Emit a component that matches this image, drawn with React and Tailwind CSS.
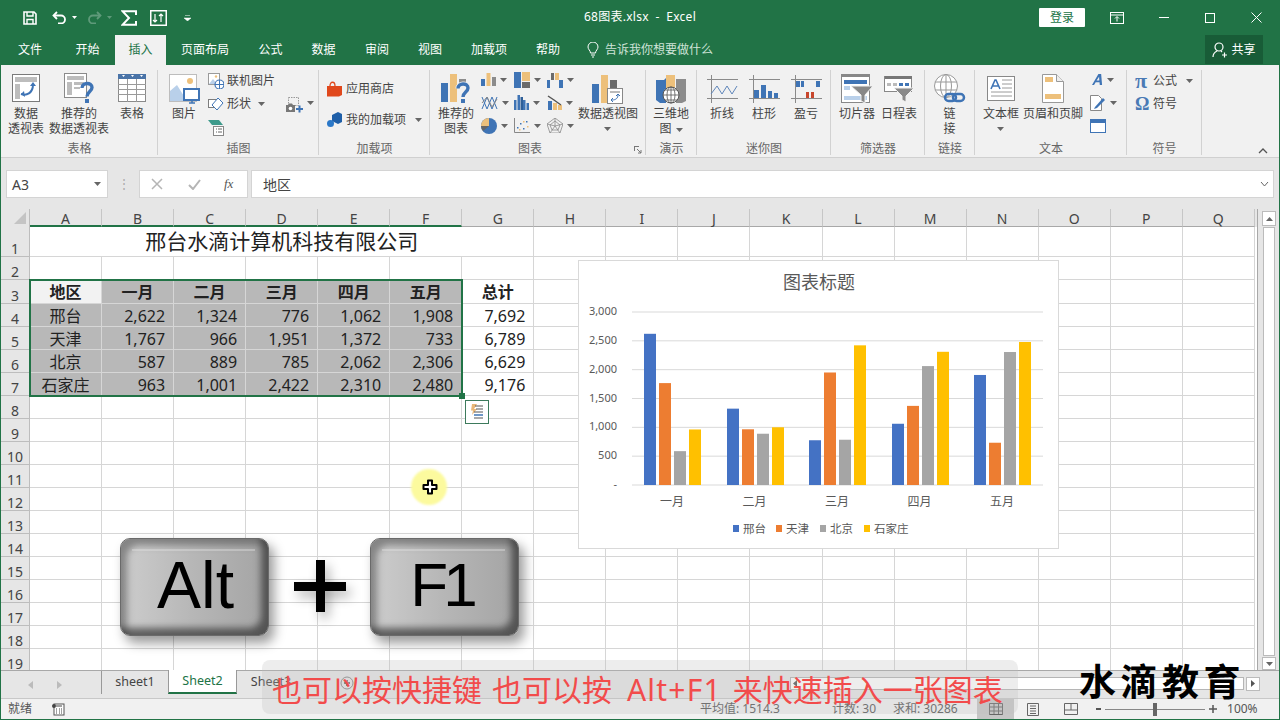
import React from "react";

const cjk = "font-['Noto_Sans','Noto_Sans_CJK_SC',sans-serif]";

const COLS = ["A","B","C","D","E","F","G","H","I","J","K","L","M","N","O","P","Q"];
const table = [
  ["邢台","2,622","1,324","776","1,062","1,908","7,692"],
  ["天津","1,767","966","1,951","1,372","733","6,789"],
  ["北京","587","889","785","2,062","2,306","6,629"],
  ["石家庄","963","1,001","2,422","2,310","2,480","9,176"],
];
const heads = ["地区","一月","二月","三月","四月","五月","总计"];

const B = "#3f74b5", O = "#edc07b", G = "#8c8c8c", D = "#6b6b6b";

function Caret({ className = "" }) {
  return <svg width="7" height="4" viewBox="0 0 7 4" className={className}><path d="M0 0h7L3.5 4z" fill="#666" /></svg>;
}

function Big({ icon, lines, w, caret }) {
  return (
    <div className={`flex flex-col items-center shrink-0 pt-[7px] ${w}`}>
      <div className="h-[33px] flex items-center justify-center">{icon}</div>
      <div className="mt-[1px] text-[12px] leading-[15px] text-[#444] text-center whitespace-nowrap">
        {lines.map((l, i) => <div key={i}>{l}</div>)}
        {caret && <div className="flex justify-center h-[15px] items-center"><Caret /></div>}
      </div>
    </div>
  );
}

function Group({ w, label, children, line = true, corner }) {
  return (
    <div className={`relative flex flex-col shrink-0 h-full ${w}`}>
      <div className="flex flex-1 min-h-0">{children}</div>
      <div className={`h-[20px] pt-[3px] text-[12px] leading-[18px] text-[#666] text-center ${corner ? "pr-[16px]" : ""}`}>{label}</div>
      {line && <div className="absolute right-0 top-[5px] bottom-[2px] w-[1px] bg-[#d2d2d2]" />}
      {corner && <svg width="8" height="8" viewBox="0 0 8 8" className="absolute right-[4px] bottom-[3px]"><path d="M0 .5h5M.5 0v5M3 3l4 4M7 4v3H4" stroke="#777" fill="none" /></svg>}
    </div>
  );
}

const IPivot = () => (
  <svg width="29" height="29" viewBox="0 0 29 29"><rect x=".5" y=".5" width="27" height="27" fill="#fff" stroke="#7a7a7a"/><path d="M3 3h22v5H3zM3 10h5v15H3z" fill="#bdbdbd"/><path d="M9 20c6 2 11-1 12-8" fill="none" stroke={B} strokeWidth="2"/><path d="M18 12l3-4 3 4zM12 17l-3 3 4 3z" fill={B}/></svg>
);
const IRecPivot = () => (
  <svg width="30" height="31" viewBox="0 0 30 31"><rect x=".5" y=".5" width="22" height="24" fill="#fff" stroke="#8a8a8a"/><path d="M3 3h17v4H3zM3 9h5v13H3zM10 9h10v3H10zM10 14h6v2H10z" fill="#bcbcbc"/><path d="M18 15c0-6 10-6 10-.5 0 4-5 4-5 9" fill="none" stroke={B} strokeWidth="3.400"/><rect x="21" y="26" width="4" height="4" fill={B}/></svg>
);
const ITable = () => (
  <svg width="29" height="29" viewBox="0 0 29 29"><rect x=".5" y=".5" width="27" height="27" fill="#fff" stroke="#8a8a8a"/><rect x="0" y="0" width="28" height="5" fill="#4a74a8"/><path d="M0 10.500h28M0 15.500h28M0 20.500h28M9.500 5v23M18.500 5v23" stroke="#9a9a9a"/><path d="M4 1l1.500 2 1.500-2zM13 1l1.500 2 1.500-2zM22 1l1.500 2 1.500-2z" fill="#fff"/></svg>
);
const IPicture = () => (
  <svg width="31" height="30" viewBox="0 0 31 30"><rect x=".5" y=".5" width="27" height="27" fill="#fff" stroke="#bdbdbd"/><circle cx="21" cy="7" r="3" fill={O}/><path d="M1 27V17l7-6 10 16z" fill="#b9d0ea"/><rect x="15" y="15" width="15" height="11" fill="#fff" stroke={B} strokeWidth="2"/><path d="M20 29h6M23 26v3" stroke={B} strokeWidth="1.500"/></svg>
);
const IOnline = () => (
  <svg width="16" height="16" viewBox="0 0 16 16"><rect x=".5" y=".5" width="11" height="11" fill="#fff" stroke="#9a9a9a"/><path d="M1 11l4-5 4 5z" fill="#b9d0ea"/><circle cx="8" cy="3.500" r="1.200" fill={O}/><circle cx="11.500" cy="11.500" r="4.500" fill="#fff" stroke={B} strokeWidth="1.200"/><path d="M7 11.500h9M11.500 7v9" stroke={B}/></svg>
);
const IShape = () => (
  <svg width="16" height="16" viewBox="0 0 16 16"><rect x=".5" y="3.500" width="8" height="8" fill="#fff" stroke="#7d7d7d"/><path d="M10 2l5 5-6 7-5-5z" fill="#fff" stroke={B}/></svg>
);
const ISmart = () => (
  <svg width="16" height="17" viewBox="0 0 16 17"><path d="M0 1h11l4 5H4z" fill="#3d9a8b"/><rect x="5.500" y="7.500" width="10" height="9" fill="#fff" stroke="#888"/><path d="M8 10h1M8 13h1M10 10h4M10 13h4" stroke="#666"/></svg>
);
const IShot = () => (
  <svg width="18" height="16" viewBox="0 0 18 16"><rect x="3.500" y=".5" width="10" height="8" fill="none" stroke="#999" strokeDasharray="1.500 1"/><path d="M1 8h2l1-1.500h3L8 8h2v7H1z" fill="#777"/><circle cx="5.500" cy="11.500" r="1.800" fill="#fff"/><path d="M11 12h7M14.500 8.500v7" stroke={B} strokeWidth="2"/></svg>
);
const IStore = () => (
  <svg width="15" height="16" viewBox="0 0 15 16"><path d="M0 5h15v9l-3 1.500H0z" fill="#e0481c"/><path d="M3 5c0-5 5-5 5 0" fill="none" stroke="#e0481c" strokeWidth="1.300"/></svg>
);
const IAddin = () => (
  <svg width="15" height="16" viewBox="0 0 15 16"><path d="M5 3l6-3 4 2v8l-4 2-6-3z" fill="#1f5fa8"/><circle cx="3.500" cy="11.500" r="3.500" fill="#2b78c8"/></svg>
);
const IRecChart = () => (
  <svg width="30" height="31" viewBox="0 0 30 31"><path d="M0 10h7v19H0z" fill={B}/><path d="M9 1h7v28H9z" fill={O}/><path d="M18 6h7v5h-7z" fill={G}/><path d="M17 15.500c0-6 10-6 10-.5 0 4-5 4-5 9" fill="none" stroke="#f1f1f1" strokeWidth="5"/><path d="M17 15.500c0-6 10-6 10-.5 0 4-5 4-5 9" fill="none" stroke={B} strokeWidth="3.400"/><rect x="20" y="26" width="4" height="4" fill={B}/></svg>
);
const MiniBars = () => <svg width="15" height="15" viewBox="0 0 15 15"><path d="M0 7h4v7H0z" fill={B}/><path d="M5.500 1h4v13h-4z" fill={O}/><path d="M11 5h4v9h-4z" fill={G}/></svg>;
const MiniLine = () => <svg width="17" height="16" viewBox="0 0 17 16"><path d="M1 2l5 12 5-12 5 12M1 14l5-12 5 12 5-12" fill="none" stroke={B}/><path d="M1 8l5-6 5 10 5-8" fill="none" stroke="#888"/></svg>;
const MiniPie = () => <svg width="16" height="16" viewBox="0 0 16 16"><circle cx="8" cy="8" r="8" fill={B}/><path d="M8 8V0A8 8 0 0 0 0 8z" fill={O}/><path d="M8 8H0a8 8 0 0 0 2 5z" fill="#666"/></svg>;
const MiniTree = () => <svg width="16" height="16" viewBox="0 0 16 16"><path d="M0 0h7v16H0z" fill={B}/><path d="M8 0h8v9H8z" fill={O}/><path d="M8 10h8v6H8z" fill={D}/></svg>;
const MiniBars2 = () => <svg width="15" height="15" viewBox="0 0 15 15"><path d="M0 5h2.500v10H0zM3.500 0H6v15H3.500zM9 5h2.500v10H9zM12.500 8H15v7h-2.500z" fill={B}/><path d="M6.500 2H9v13H6.500z" fill="#2f5f98"/></svg>;
const MiniScatter = () => <svg width="16" height="15" viewBox="0 0 16 15"><path d="M.5 0v14.500H16" fill="none" stroke="#888"/><path d="M3 9h1.500v1.500H3zM6 5h1.500v1.500H6zM9 10h1.500v1.500H9zM12 3h1.500v1.500H12z" fill={B}/><path d="M5 11h1.500v1.500H5zM9 3h1.500v1.500H9zM13 8h1.500v1.500H13z" fill={O}/></svg>;
const MiniWater = () => <svg width="16" height="16" viewBox="0 0 16 16"><path d="M0 8h3v8H0z" fill={B}/><path d="M4 1h3v7H4z" fill={D}/><path d="M8 1h4v7H8z" fill={O}/><path d="M12 8h4v8h-4z" fill={B}/></svg>;
const MiniCombo = () => <svg width="15" height="15" viewBox="0 0 15 15"><path d="M1 6h4v9H1z" fill={B}/><path d="M6 8h4v7H6zM11 10h4v5h-4z" fill={O}/><path d="M1 1l6 4 7 5" fill="none" stroke="#555" strokeWidth="1.500"/></svg>;
const MiniRadar = () => <svg width="16" height="15" viewBox="0 0 16 15"><path d="M8 0l8 6-3 9H3L0 6zM8 3l5 4-2 5H5L3 7zM8 0v8M0 6l8 2 8-2M3 15l5-7 5 7" fill="none" stroke="#8a8a8a" strokeWidth=".8"/></svg>;
const IPivotChart = () => (
  <svg width="32" height="30" viewBox="0 0 32 30"><path d="M0 10h7v19H0z" fill={B}/><path d="M9 1h7v28H9z" fill={O}/><path d="M18 6h7v8h-7z" fill={D}/><rect x="15.500" y="14.500" width="15" height="15" fill="#fff" stroke="#888"/><path d="M18 17h10v2H18z" fill="#bbb"/><path d="M20 26c4 0 6-2 6-5M24 22l2-2 2 2M21 24l-2 2 2 2" fill="none" stroke={B}/></svg>
);
const I3D = () => (
  <svg width="32" height="30" viewBox="0 0 32 30"><path d="M1 6h8l2-2v25H5L1 26z" fill={B}/><path d="M11 1h9v26h-9z" fill={O}/><path d="M21 5h10v22l-4 2h-6z" fill="#8c8c8c"/><circle cx="16" cy="21" r="8" fill="#fff" stroke="#555"/><path d="M8 21h16M16 13v16M10 16h12M10 26h12" stroke="#555" fill="none" strokeWidth=".8"/><ellipse cx="16" cy="21" rx="4" ry="8" fill="none" stroke="#555" strokeWidth=".8"/></svg>
);
const Spark = ({ children }) => (
  <svg width="31" height="28" viewBox="0 0 31 28"><path d="M0 4.500h31M0 23.500h31M4.500 0v28" stroke="#8a8a8a"/>{children}</svg>
);
const ISlicer = () => (
  <svg width="32" height="29" viewBox="0 0 32 29"><rect x=".5" y=".5" width="28" height="28" fill="#fff" stroke="#888"/><path d="M1 0h27v3H1z" fill="#888"/><path d="M3 6h23v4H3z" fill={B}/><path d="M3 12h6v4H3zM3 22h23v4H3z" fill="#b9d0ea"/><path d="M10 12h22l-8 9v8l-4-2v-6z" fill="#888" stroke="#f1f1f1"/></svg>
);
const ITimeline = () => (
  <svg width="30" height="26" viewBox="0 0 30 26"><rect x=".5" y=".5" width="27" height="15" fill="#fff" stroke="#888"/><path d="M1 0h27v3H1z" fill="#777"/><path d="M3 7h4v3H3zM9 7h4v3H9z" fill="#bbb"/><path d="M15 7h4v3h-4zM21 7h4v3h-4z" fill={B}/><path d="M10 12h20l-8 8v6l-4-2v-4z" fill="#8a8a8a" stroke="#f1f1f1"/></svg>
);
const ILink = () => (
  <svg width="32" height="30" viewBox="0 0 32 30"><circle cx="12" cy="12" r="11.500" fill="#fff" stroke="#999"/><ellipse cx="12" cy="12" rx="5.500" ry="11.500" fill="none" stroke="#999"/><path d="M1 8h22M1 16h22M12 0v24" stroke="#999"/><rect x="11" y="20" width="11" height="7" rx="3.500" fill="none" stroke={B} strokeWidth="2.500"/><rect x="19" y="20" width="11" height="7" rx="3.500" fill="none" stroke={B} strokeWidth="2.500"/></svg>
);
const ITextBox = () => (
  <svg width="29" height="26" viewBox="0 0 29 26"><rect x=".5" y=".5" width="27" height="24" fill="#fff" stroke="#888"/><path d="M15 4h10M15 8h10M15 12h10M4 16h21M4 20h21" stroke="#9a9a9a"/><path d="M4 13L8 4h1l4 9M5.500 10h6" fill="none" stroke={B} strokeWidth="1.600"/></svg>
);
const IHeader = () => (
  <svg width="22" height="29" viewBox="0 0 22 29"><path d="M.5.5h14l7 7v21H.5z" fill="#fff" stroke="#999"/><path d="M14.500.5v7h7" fill="#eee" stroke="#999"/><path d="M3 3h8v5H3zM3 20h16v5H3z" fill={O}/></svg>
);
const IArt = () => <svg width="11" height="12" viewBox="0 0 12 13"><path d="M0 12L7 0h3l1 12H8.500l-.3-3H4l-1.800 3zM5 7h3L7.700 3z" fill={B}/></svg>;
const ISign = () => <svg width="16" height="16" viewBox="0 0 16 16"><path d="M.5.5h8l3 3v12H.5z" fill="#fff" stroke="#888"/><path d="M5 12L13 3l2 2-8 8-3 1z" fill={B}/></svg>;
const IObj = () => <svg width="16" height="14" viewBox="0 0 16 14"><rect x=".5" y=".5" width="15" height="13" fill="#fff" stroke={B}/><path d="M0 0h16v4H0z" fill={B}/></svg>;

function Small({ icon, caret }) {
  return <div className="flex items-center gap-[4px] h-[23px] w-[33px]">{icon}{caret && <Caret />}</div>;
}

function Ribbon() {
  return (
    <div className={`relative flex h-[93px] bg-[#f1f1f1] border-b border-[#d0d0d0] ${cjk}`}>
      <Group w="w-[157px]" label="表格">
        <Big w="w-[50px]" icon={<IPivot />} lines={["数据", "透视表"]} />
        <Big w="w-[56px]" icon={<IRecPivot />} lines={["推荐的", "数据透视表"]} />
        <Big w="w-[50px]" icon={<ITable />} lines={["表格"]} />
      </Group>
      <Group w="w-[161px]" label="插图">
        <div className="w-[50px] shrink-0"><Big w="w-[52px]" icon={<IPicture />} lines={["图片"]} /></div>
        <div className="flex flex-col gap-[7px] pt-[8px] w-[76px] shrink-0 text-[12px] text-[#444]">
          <div className="flex items-center gap-[3px] h-[16px]"><IOnline />联机图片</div>
          <div className="flex items-center gap-[3px] h-[16px]"><IShape />形状<Caret className="ml-1" /></div>
          <div className="h-[16px]"><ISmart /></div>
        </div>
        <div className="pt-[32px] ml-[1px] flex gap-[4px] items-start">
          <IShot />
          <Caret className="mt-[4px]" />
        </div>
      </Group>
      <Group w="w-[111px]" label="加载项">
        <div className="flex flex-col gap-[15px] pl-[8px] pt-[16px] text-[12px] text-[#444]">
          <div className="flex items-center gap-[4px] h-[16px]"><IStore />应用商店</div>
          <div className="flex items-center gap-[4px] h-[16px]"><IAddin />我的加载项<Caret className="ml-[5px]" /></div>
        </div>
      </Group>
      <Group w="w-[216px]" label="图表" corner>
        <Big w="w-[52px]" icon={<IRecChart />} lines={["推荐的", "图表"]} />
        <div className="grid grid-cols-[33px_33px_33px] grid-rows-[23px_23px_23px] pt-[3px] -ml-[1px] w-[96px] shrink-0">
          <Small icon={<MiniBars />} caret /><Small icon={<MiniTree />} caret /><Small icon={<MiniWater />} caret />
          <Small icon={<MiniLine />} caret /><Small icon={<MiniBars2 />} caret /><Small icon={<MiniCombo />} caret />
          <Small icon={<MiniPie />} caret /><Small icon={<MiniScatter />} caret /><Small icon={<MiniRadar />} caret />
        </div>
        <Big w="w-[62px]" icon={<IPivotChart />} lines={["数据透视图"]} caret />
      </Group>
      <Group w="w-[51px]" label="演示">
        <div className="w-[50px]">
          <div className="flex flex-col items-center pt-[7px]">
            <div className="h-[33px] flex items-center"><I3D /></div>
            <div className="mt-[1px] text-[12px] leading-[15px] text-[#444] text-center">三维地<br />图 <Caret className="inline-block ml-[1px]" /></div>
          </div>
        </div>
      </Group>
      <Group w="w-[134px]" label="迷你图">
        <div className="w-[4px]" />
        <Big w="w-[42px]" icon={<Spark><path d="M4 19l6-8 5 8 5-8 5 8 5-8" fill="none" stroke="#5f86ba" /></Spark>} lines={["折线"]} />
        <Big w="w-[42px]" icon={<Spark><path d="M5 15h5v8H5zM12 10h5v13h-5zM19 16h4v7h-4zM25 18h4v5h-4z" fill={B} /></Spark>} lines={["柱形"]} />
        <Big w="w-[42px]" icon={<Spark><path d="M5 6h4v6H5zM10 6h3v6h-3zM25 6h4v6h-4z" fill={B} /><path d="M15 17h3v6h-3zM20 17h3v6h-3z" fill="#c8462c" /></Spark>} lines={["盈亏"]} />
      </Group>
      <Group w="w-[94px]" label="筛选器">
        <div className="w-[5px]" />
        <Big w="w-[42px]" icon={<ISlicer />} lines={["切片器"]} />
        <Big w="w-[42px]" icon={<ITimeline />} lines={["日程表"]} />
      </Group>
      <Group w="w-[50px]" label="链接">
        <Big w="w-[49px]" icon={<ILink />} lines={["链", "接"]} />
      </Group>
      <Group w="w-[152px]" label="文本">
        <Big w="w-[52px]" icon={<ITextBox />} lines={["文本框"]} caret />
        <Big w="w-[62px] -ml-[5px]" icon={<IHeader />} lines={["页眉和页脚"]} />
        <div className="flex flex-col pt-[3px] pl-[6px]">
          <div className="pl-[2px]"><Small icon={<IArt />} caret /></div>
          <Small icon={<ISign />} caret />
          <Small icon={<IObj />} />
        </div>
      </Group>
      <Group w="w-[75px]" label="符号">
        <div className="flex flex-col gap-[6px] pl-[8px] pt-[7px] text-[12px] text-[#444]">
          <div className="flex items-center h-[17px]">
            <span className="w-[16px] font-['Liberation_Serif',serif] text-[22px] font-bold text-[#4a7ab5] leading-none">π</span>
            <span className="ml-[2px]">公式</span><Caret className="ml-[9px]" />
          </div>
          <div className="flex items-center h-[17px]">
            <span className="w-[16px] font-['Liberation_Serif',serif] text-[18px] font-bold text-[#4a7ab5] leading-none">Ω</span>
            <span className="ml-[2px]">符号</span>
          </div>
        </div>
      </Group>
      <svg width="10" height="6" viewBox="0 0 10 6" className="absolute right-[11px] bottom-[3px]"><path d="M1 5l4-4 4 4" fill="none" stroke="#555" strokeWidth="1.300" /></svg>
    </div>
  );
}

function TitleBar() {
  return (
    <div className={`relative flex items-center h-[35px] bg-[#217346] text-white ${cjk}`}>
      <div className="flex items-center pl-[23px]">
        <svg width="14" height="14" viewBox="0 0 14 14"><path d="M1 1h10l2 2v10H1z" fill="none" stroke="#fff" strokeWidth="1.600"/><path d="M4 1v4h6V1M4 13V8.500h6V13" fill="none" stroke="#fff" strokeWidth="1.400"/></svg>
        <div className="flex items-center gap-[5px] ml-[15px]">
          <svg width="15" height="13" viewBox="0 0 15 13"><path d="M5 1L1.500 4.500 5 8" fill="none" stroke="#fff" strokeWidth="1.800"/><path d="M2 4.500h7a4 4 0 0 1 0 8H6" fill="none" stroke="#fff" strokeWidth="1.800"/></svg>
          <svg width="5" height="3" viewBox="0 0 5 3"><path d="M0 0h5L2.500 3z" fill="#fff"/></svg>
        </div>
        <div className="flex items-center gap-[5px] ml-[10px]">
          <svg width="15" height="13" viewBox="0 0 15 13"><path d="M10 1l3.500 3.500L10 8" fill="none" stroke="#5f9a7a" strokeWidth="1.800"/><path d="M13 4.500H6a4 4 0 0 0 0 8h3" fill="none" stroke="#5f9a7a" strokeWidth="1.800"/></svg>
          <svg width="5" height="3" viewBox="0 0 5 3"><path d="M0 0h5L2.500 3z" fill="#5f9a7a"/></svg>
        </div>
        <svg width="16" height="16" viewBox="0 0 16 16" className="ml-[9px]"><path d="M15 5V1.200H1.500l6.500 6.800-6.500 6.800H15V11" fill="none" stroke="#fff" strokeWidth="2"/></svg>
        <svg width="17" height="16" viewBox="0 0 17 16" className="ml-[13px]"><rect x=".75" y=".75" width="15.500" height="14.500" fill="none" stroke="#fff" strokeWidth="1.500"/><path d="M5 4v8M3 10l2 2 2-2M11 12V4M9 6l2-2 2 2" fill="none" stroke="#fff" strokeWidth="1.200"/></svg>
        <svg width="7" height="6" viewBox="0 0 7 6" className="ml-[17px]"><path d="M1 .5h5M0 3h7l-3.500 3z" fill="#fff" stroke="#fff" strokeWidth=".5"/></svg>
      </div>
      <div className="absolute left-0 right-0 top-[8px] text-center text-[12px] leading-[17px] tracking-[.25px] pointer-events-none">68图表.xlsx&nbsp;&nbsp;-&nbsp;&nbsp;Excel</div>
      <div className="ml-auto flex items-center h-full">
        <div className="w-[46px] h-[19px] bg-white text-[#217346] text-[12px] leading-[19px] text-center rounded-[1px] mr-[25px]">登录</div>
        <svg width="14" height="12" viewBox="0 0 14 12" className="mr-[35px]"><rect x=".5" y=".5" width="13" height="11" fill="none" stroke="#fff"/><path d="M0 3h14M7 9.500V5M5 6.500L7 4.500l2 2" fill="none" stroke="#fff"/></svg>
        <div className="w-[10px] h-[1px] bg-white mr-[36px]" />
        <div className="w-[10px] h-[10px] border border-white mr-[36px]" />
        <svg width="11" height="11" viewBox="0 0 11 11" className="mr-[18px]"><path d="M.5.5l10 10M10.500.5l-10 10" stroke="#fff"/></svg>
      </div>
    </div>
  );
}

function TabBar() {
  const tabs = [["文件", 60, false],["开始", 55, false],["插入", 51, true],["页面布局", 78, false],["公式", 53, false],["数据", 53, false],["审阅", 54, false],["视图", 52, false],["加载项", 66, false],["帮助", 52, false]];
  return (
    <div className={`flex items-stretch h-[30px] bg-[#217346] text-white text-[12px] ${cjk}`}>
      {tabs.map(([t, w, on]) => (
        <div key={t} style={{ width: w }} className={`flex items-center justify-center shrink-0 ${on ? "bg-[#f1f1f1] text-[#217346]" : ""}`}>{t}</div>
      ))}
      <div className="flex items-center gap-[6px] ml-[13px] text-[#cfe3d8]">
        <svg width="12" height="16" viewBox="0 0 12 16"><path d="M3.500 11c0-2.500-2.500-3.500-2.500-6a5 5 0 0 1 10 0c0 2.500-2.500 3.500-2.500 6zM4 13h4M5 15h2" fill="none" stroke="#fff"/></svg>
        告诉我你想要做什么
      </div>
      <div className="ml-auto mr-[17px] mb-[1px] w-[58px] bg-[#185c37] flex items-center justify-center gap-[3px]">
        <svg width="16" height="16" viewBox="0 0 16 16"><circle cx="7" cy="5" r="4" fill="none" stroke="#fff" strokeWidth="1.200"/><path d="M1 15c0-3 2-5 4-6M9 9l1 1M10 13h5M12.500 10.500v5" fill="none" stroke="#fff" strokeWidth="1.200"/></svg>
        共享
      </div>
    </div>
  );
}

function FormulaBar() {
  return (
    <div className={`flex items-center h-[51px] pt-[12px] pb-[11px] pl-[5px] pr-[5px] bg-[#e6e6e6] ${cjk}`}>
      <div className="flex items-center w-[102px] h-[28px] bg-white border border-[#d4d4d4] pl-[5px] pr-[6px] text-[14px] text-[#444]">
        A3<Caret className="ml-auto" />
      </div>
      <div className="w-[31px] flex justify-center text-[#aaa] text-[12px]">⋮</div>
      <div className="flex items-center w-[109px] h-[28px] bg-white border border-[#d4d4d4] text-[#b5b5b5]">
        <svg width="12" height="12" viewBox="0 0 12 12" className="ml-[11px]"><path d="M1 1l10 10M11 1L1 11" stroke="#b5b5b5" strokeWidth="1.500"/></svg>
        <svg width="13" height="11" viewBox="0 0 13 11" className="ml-[25px]"><path d="M1 6l4 4 7-9" fill="none" stroke="#b5b5b5" strokeWidth="2"/></svg>
        <span className="ml-[23px] font-['Liberation_Serif',serif] italic text-[13px] text-[#555]">fx</span>
      </div>
      <div className="flex items-center flex-1 h-[28px] ml-[3px] bg-white border border-[#d4d4d4] pl-[11px] text-[14px] text-[#444]">
        地区
        <svg width="9" height="6" viewBox="0 0 9 6" className="ml-auto mr-[4px]"><path d="M1 1l3.500 4L8 1" fill="none" stroke="#666"/></svg>
      </div>
    </div>
  );
}

function Cell({ w = "w-[72.05px]", className = "", children }) {
  return <div className={`shrink-0 h-full flex items-center border-r border-b border-[#d6d6d6] text-[16px] text-[#222] ${w} ${className}`}>{children}</div>;
}

function Row({ n, h, children, fill = 17 }) {
  return (
    <div className={`flex shrink-0 ${h}`}>
      <div className="w-[29px] shrink-0 bg-[#e6e6e6] border-r border-b border-[#bdbdbd] text-[14px] leading-[14px] text-[#444] flex items-end justify-center">{n}</div>
      {children}
      {Array.from({ length: fill }).map((_, i) => <Cell key={i} />)}
    </div>
  );
}

function Sheet() {
  const rows = [];
  for (let n = 8; n <= 19; n++) rows.push(<Row key={n} n={n} h="h-[23px]" />);
  const sel = "bg-[#b8b8b8] border-[#a8a8a8]";
  return (
    <div className={`relative flex-1 min-h-0 overflow-hidden bg-[#e6e6e6] ${cjk}`}>
      <div className="absolute top-0 left-0 right-[21px] bottom-0 overflow-hidden border-r border-[#a8a8a8]">
        <div className="flex h-[18px] bg-[#e6e6e6] shrink-0">
          <div className="w-[29px] shrink-0 border-r border-[#bdbdbd] relative">
            <svg width="12" height="12" viewBox="0 0 12 12" className="absolute right-[3px] bottom-[3px]"><path d="M12 0v12H0z" fill="#c4c4c4"/></svg>
          </div>
          {COLS.map((c, i) => (
            <div key={c} className={`w-[72.05px] shrink-0 border-r border-[#c6c6c6] text-center text-[14px] leading-[19px] text-[#444] border-b ${i < 6 ? "border-b-2 border-b-[#217346]" : "border-b-[#a8a8a8]"}`}>{c}</div>
          ))}
        </div>
        <div className="relative bg-white">
          <Row n={1} h="h-[30px]" fill={10}>
            <Cell w="w-[504.350px]" className="justify-center text-[21px] text-[#111] pt-[1px]">邢台水滴计算机科技有限公司</Cell>
          </Row>
          <Row n={2} h="h-[23px]" />
          <Row n={3} h="h-[24px]" fill={10}>
            <Cell className="justify-center font-bold text-[#111] bg-[#f2f2f2] border-[#d6d6d6]">{heads[0]}</Cell>
            {heads.slice(1, 6).map((t) => <Cell key={t} className={`justify-center font-bold text-[#111] ${sel}`}>{t}</Cell>)}
            <Cell className="justify-center font-bold text-[#111]">{heads[6]}</Cell>
          </Row>
          {table.map((r, idx) => (
            <Row key={idx} n={idx + 4} h="h-[23px]" fill={10}>
              <Cell className={`justify-center pt-[2px] ${sel}`}>{r[0]}</Cell>
              {r.slice(1, 6).map((v, j) => <Cell key={j} className={`justify-end pr-[8px] pt-[2px] ${sel}`}>{v}</Cell>)}
              <Cell className="justify-end pr-[8px] pt-[2px]">{r[6]}</Cell>
            </Row>
          ))}
          {rows}
          <div className="absolute left-[28px] top-[52px] w-[434px] h-[118px] border-2 border-[#217346] pointer-events-none" />
          <div className="absolute left-[458px] top-[166px] w-[6px] h-[6px] bg-[#217346]" />
          <div className="absolute left-[464px] top-[173px] w-[24px] h-[24px] bg-white border border-[#3d7a5c] flex items-center justify-center">
            <svg width="16" height="16" viewBox="0 0 16 16"><path d="M3 0h5L5 5h3l-5 6 1-4.500H2z" fill="#e9b777"/><path d="M6 2h8M7 5h7M5 8h9" stroke="#555"/><path d="M5 11h9" stroke="#3f74b5" strokeWidth="1.500"/><path d="M5 14h9" stroke="#555"/></svg>
          </div>
        </div>
      </div>
      <div className="absolute top-[2px] right-[3px] w-[14px] bottom-0 flex flex-col items-center">
        <div className="w-[14px] h-[15px] shrink-0 border border-[#bbb] bg-white flex items-center justify-center"><svg width="7" height="4" viewBox="0 0 7 4"><path d="M3.500 0L7 4H0z" fill="#666"/></svg></div>
        <div className="flex-1 w-[12px] my-[1px] bg-white border border-[#bbb]" />
        <div className="w-[14px] h-[13px] shrink-0 border border-[#bbb] bg-white flex items-center justify-center"><Caret /></div>
      </div>
    </div>
  );
}

function SheetTabs() {
  return (
    <div className={`flex items-stretch h-[28px] shrink-0 bg-[#e6e6e6] border-t border-[#a8a8a8] text-[12.500px] text-[#444] ${cjk}`}>
      <div className="w-[100px] shrink-0 flex items-center pl-[27px] gap-[24px]">
        <svg width="5" height="8" viewBox="0 0 5 8"><path d="M5 0v8L0 4z" fill="#bbb"/></svg>
        <svg width="5" height="8" viewBox="0 0 5 8"><path d="M0 0v8l5-4z" fill="#bbb"/></svg>
      </div>
      <div className="w-[67px] shrink-0 mb-[4px] pb-[1px] border-l border-[#999] flex items-center justify-center">sheet1</div>
      <div className="w-[69px] shrink-0 mb-[4px] -mt-[1px] bg-white border-x border-[#999] border-b-2 border-b-[#217346] text-[#217346] flex items-center justify-center">Sheet2</div>
      <div className="w-[68px] shrink-0 mb-[4px] pb-[1px] flex items-center justify-center">Sheet3</div>
      <div className="w-[83px] shrink-0 flex items-center justify-center pb-[4px]">
        <svg width="14" height="14" viewBox="0 0 14 14"><circle cx="7" cy="7" r="6" fill="none" stroke="#888"/><path d="M4 7h6M7 4v6" stroke="#555" strokeWidth="1.500"/></svg>
      </div>
      <div className="flex-1 flex items-center ml-[402px] mr-[19px] pb-[2px]">
        <div className="flex-1 h-[13px] bg-white border border-[#b5b5b5] flex items-center pl-[2px]">
          <svg width="4" height="7" viewBox="0 0 4 7"><path d="M4 0v7L0 3.500z" fill="#555"/></svg>
        </div>
        <div className="w-[14px] h-[14px] ml-[2px] bg-white border border-[#bbb] flex items-center justify-center"><svg width="4" height="7" viewBox="0 0 4 7"><path d="M0 0v7l4-3.500z" fill="#555"/></svg></div>
      </div>
    </div>
  );
}

function StatusBar() {
  return (
    <div className={`flex items-center h-[22px] shrink-0 bg-[#f1f1f1] border-t border-[#c8c8c8] border-b border-b-[#217346] text-[12px] text-[#555] ${cjk}`}>
      <span className="ml-[7px]">就绪</span>
      <svg width="13" height="13" viewBox="0 0 13 13" className="ml-[20px]"><rect x="2" y="1" width="10" height="11" fill="#fff" stroke="#555"/><path d="M4 3h6M4 6h1M7 6h1M9 6h1M4 8h1M7 8h1M9 8h1M4 10h1M7 10h1M9 10h1" stroke="#444"/><circle cx="2" cy="3" r="2" fill="#444"/></svg>
      <span className="ml-[635px] w-[132px]">平均值: 1514.3</span>
      <span className="w-[61px]">计数: 30</span>
      <span className="w-[84px]">求和: 30286</span>
      <div className="w-[37px] h-full bg-[#c6c6c6] flex items-center justify-center">
        <svg width="14" height="12" viewBox="0 0 14 12"><path d="M.5.5h13v11H.5zM.5 4h13M.5 8h13M5 .5v11M9.500.5v11" fill="none" stroke="#666"/></svg>
      </div>
      <div className="w-[38px] flex justify-center"><svg width="12" height="13" viewBox="0 0 12 13"><path d="M.5.5h11v12H.5zM3 3h6M3 5.500h6M3 8h6M3 10.500h6" fill="none" stroke="#666"/></svg></div>
      <div className="w-[38px] flex justify-center"><svg width="14" height="12" viewBox="0 0 14 12"><path d="M.5.5h13v11H.5zM.5 7h13M7 .5V7" fill="none" stroke="#666" /></svg></div>
      <span className="ml-[6px] w-[5px] h-[2px] bg-[#555]" />
      <div className="relative ml-[4px] w-[100px] h-[1px] bg-[#888]">
        <div className="absolute left-[48px] -top-[6px] w-[4px] h-[13px] bg-[#666]" />
      </div>
      <svg width="8" height="8" viewBox="0 0 8 8" className="ml-[4px]"><path d="M0 4h8M4 0v8" stroke="#555" strokeWidth="1.500"/></svg>
      <span className="ml-[10px]">100%</span>
    </div>
  );
}

const DATA = [
  [2622, 1767, 587, 963],
  [1324, 966, 889, 1001],
  [776, 1951, 785, 2422],
  [1062, 1372, 2062, 2310],
  [1908, 733, 2306, 2480],
];
const GX = [65, 148, 230, 313, 395];
const CLR = ["#4472c4", "#ed7d31", "#a5a5a5", "#ffc000"];
const chartFont = "Noto Sans, Noto Sans CJK SC, sans-serif";

function Chart() {
  const Y0 = 224, K = 173 / 3000;
  return (
    <div className="absolute left-[578px] top-[260px] w-[481px] h-[289px] bg-white border border-[#d9d9d9]">
      <svg width="479" height="287" viewBox="0 0 479 287" fontFamily={chartFont}>
        <text x="240" y="28" textAnchor="middle" fontSize="18" fill="#595959">图表标题</text>
        {[0, 500, 1000, 1500, 2000, 2500, 3000].map((v) => {
          const y = Y0 - v * K;
          return (
            <g key={v}>
              <line x1="53" x2="464" y1={y} y2={y} stroke="#d9d9d9" />
              <text x="38" y={y + 3} textAnchor="end" fontSize="11" fill="#595959">{v === 0 ? "-" : v.toLocaleString("en-US")}</text>
            </g>
          );
        })}
        {DATA.map((g, i) => g.map((v, j) => (
          <rect key={j} x={GX[i] + j * 15} y={Y0 - v * K} width="12" height={v * K} fill={CLR[j]} />
        )))}
        {["一月", "二月", "三月", "四月", "五月"].map((m, i) => (
          <text key={m} x={93 + i * 82.5} y="245" textAnchor="middle" fontSize="12" fill="#595959">{m}</text>
        ))}
        {[["邢台", 154, 164], ["天津", 197, 207], ["北京", 241, 251], ["石家庄", 285, 295]].map(([t, sx, tx], i) => (
          <g key={t}>
            <rect x={sx} y="264" width="6" height="7" fill={CLR[i]} />
            <text x={tx} y="272" fontSize="11.500" fill="#595959">{t}</text>
          </g>
        ))}
      </svg>
    </div>
  );
}

function Key({ label, className, textClass }) {
  return (
    <div className={`absolute top-[538px] w-[149px] h-[98px] rounded-[10px] border border-[#6a6a6a] bg-[linear-gradient(90deg,#cdcdcd_0%,#b6b6b6_50%,#a4a4a4_100%)] shadow-[inset_-10px_-10px_7px_-3px_rgba(50,50,50,.7),inset_9px_9px_7px_-3px_rgba(85,85,85,.6),5px_7px_12px_rgba(0,0,0,.4)] flex items-center justify-center font-['Liberation_Sans',sans-serif] leading-none text-black pb-[4px] ${textClass} ${className}`}>
      <div className="absolute left-[11px] right-[13px] top-[10px] h-[1.500px] bg-[#e4e4e4]/40" />
      {label}
    </div>
  );
}

function Overlays() {
  return (
    <>
      <Chart />
      <div className="absolute left-[411px] top-[469px] w-[36px] h-[36px] rounded-full bg-[#fcfa9e] blur-[1px]" />
      <svg width="16" height="16" viewBox="0 0 16 16" className="absolute left-[421.500px] top-[479px]"><path d="M6 1.500h4v4.500h4.500v4H10v4.500H6V10H1.500V6H6z" fill="#fff" stroke="#000" strokeWidth="2" strokeLinejoin="round"/></svg>
      <Key label="Alt" className="left-[120px]" textClass="text-[66px] pl-[2px]" />
      <div className="absolute left-[294px] top-[582px] w-[52px] h-[9px] bg-black shadow-[4px_6px_12px_rgba(0,0,0,.3)]" />
      <div className="absolute left-[316px] top-[560px] w-[8.500px] h-[52px] bg-black shadow-[4px_6px_12px_rgba(0,0,0,.3)]" />
      <Key label="F1" className="left-[370px]" textClass="text-[62px] tracking-[-5px] pr-[6px]" />
      <div className="absolute left-[262px] top-[660px] w-[756px] h-[54px] rounded-[8px] bg-[rgba(190,190,190,.28)]" />
      <div className={`absolute left-[272px] top-[668px] whitespace-nowrap text-[30px] leading-[44px] text-[#f24b4b] ${cjk}`}>
        <span>也可以按快捷键</span>
        <span className="ml-[10px]">也可以按</span>
        <span className="ml-[15px] tracking-[1.200px]">Alt+F1</span>
        <span className="ml-[11px]">来快速插入一张图表</span>
      </div>
      <div className={`absolute left-[1079px] top-[656px] text-[37px] leading-[52px] font-bold tracking-[4.500px] text-black ${cjk}`}>水滴教育</div>
    </>
  );
}

export default function App() {
  return (
    <div className={`relative w-[1280px] h-[720px] overflow-hidden flex flex-col bg-[#e6e6e6] border-x border-[#217346] ${cjk}`}>
      <div className="-mx-[1px]"><TitleBar /><TabBar /></div>
      <Ribbon />
      <FormulaBar />
      <Sheet />
      <SheetTabs />
      <StatusBar />
      <div className="-ml-[1px] absolute inset-0 pointer-events-none"><Overlays /></div>
    </div>
  );
}
